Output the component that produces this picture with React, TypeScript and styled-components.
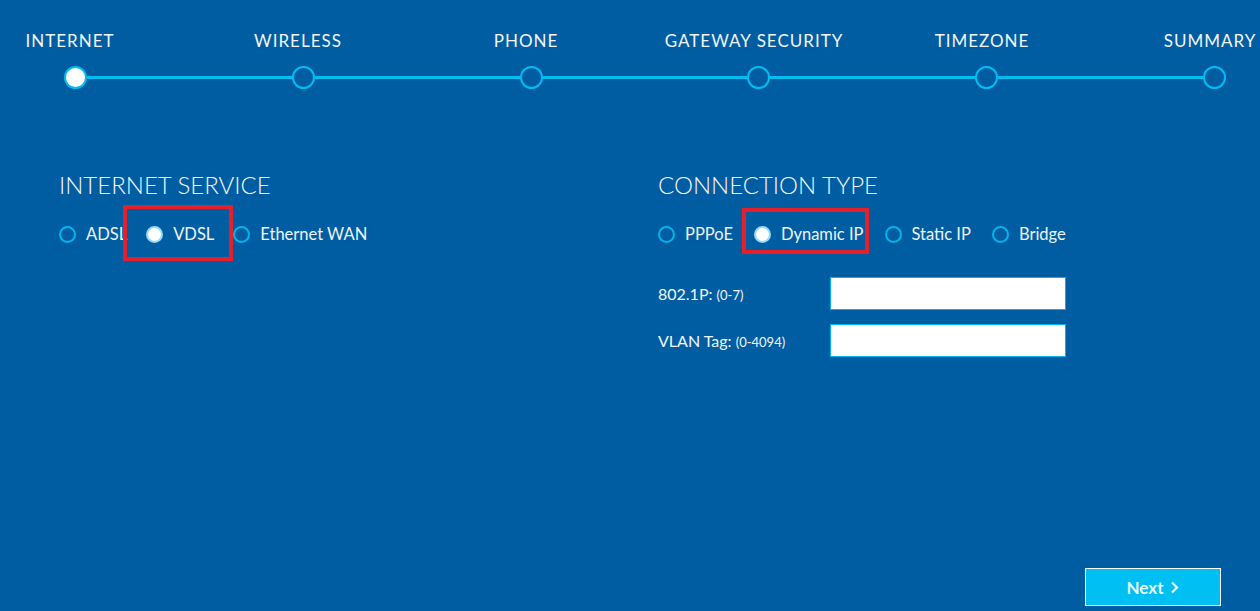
import styled, { createGlobalStyle } from "styled-components";

const GlobalStyle = createGlobalStyle`
  html, body {
    margin: 0;
    padding: 0;
    background: #005da2;
  }
  body {
    font-family: Lato, "Open Sans", sans-serif;
    color: #ffffff;
  }
`;

const Page = styled.div`
  min-height: 611px;
  display: flex;
  flex-direction: column;
  box-sizing: border-box;
  overflow: hidden;
`;

const StepLabels = styled.div`
  display: flex;
  justify-content: space-between;
  padding: 31px 39px 0 59px;
`;

const StepLabel = styled.div`
  width: 22px;
  display: flex;
  justify-content: center;
  white-space: nowrap;
  font-size: 17px;
  line-height: 20px;
  letter-spacing: 1px;
  color: #f2f6fa;
`;

const StepTrack = styled.div`
  display: flex;
  align-items: center;
  padding: 15px 34px 0 64px;
`;

const StepDot = styled.div<{ active?: boolean }>`
  width: 23px;
  height: 23px;
  box-sizing: border-box;
  border-radius: 50%;
  border: 2px solid #00bdf2;
  background: ${(p) => (p.active ? "#ffffff" : "transparent")};
  flex: none;
`;

const Connector = styled.div`
  flex: 1;
  height: 3px;
  background: #00bdf2;
`;

const Sections = styled.div`
  display: grid;
  grid-template-columns: 599px 1fr;
  padding: 81px 0 0 59px;
`;

const Section = styled.div`
  display: flex;
  flex-direction: column;
`;

const SectionTitle = styled.h2`
  margin: 0;
  font-size: 24px;
  line-height: 29px;
  font-weight: 300;
  color: #f4f7fb;
`;

const Options = styled.div<{ spacing: number }>`
  display: flex;
  align-items: center;
  gap: ${(p) => p.spacing}px;
  margin-top: 24px;
  height: 22px;
`;

const Option = styled.label`
  position: relative;
  display: flex;
  align-items: center;
  gap: 10px;
  height: 22px;
  font-size: 16.5px;
  color: #eef4fa;
`;

const RadioMark = styled.span<{ checked?: boolean }>`
  width: 17px;
  height: 17px;
  box-sizing: border-box;
  border-radius: 50%;
  border: 2px solid ${(p) => (p.checked ? "#8fdcf8" : "#00b4ec")};
  background: ${(p) => (p.checked ? "#ffffff" : "transparent")};
  flex: none;
`;

const Highlight = styled.span`
  position: absolute;
  border: 4px solid #e5202a;
  pointer-events: none;
`;

const Fields = styled.div`
  display: flex;
  flex-direction: column;
  gap: 14px;
  margin-top: 32px;
`;

const FieldRow = styled.div`
  display: flex;
  align-items: center;
`;

const FieldLabel = styled.span`
  width: 172px;
  font-size: 16px;
  color: #f2f6fa;
`;

const Range = styled.small`
  font-size: 13px;
`;

const TextInput = styled.input`
  width: 236px;
  height: 33px;
  box-sizing: border-box;
  border: 1px solid #00b4ec;
  background: #ffffff;
  margin: 0;
  padding: 0 6px;
  outline: none;
`;

const Footer = styled.div`
  margin-top: auto;
  display: flex;
  justify-content: flex-end;
  padding: 0 39px 5px 0;
`;

const NextButton = styled.button`
  width: 136px;
  height: 38px;
  box-sizing: border-box;
  background: #00c0f3;
  border: 1px solid #ffffff;
  color: #e8f8ff;
  font-family: Lato, "Open Sans", sans-serif;
  font-weight: 700;
  font-size: 17px;
  display: flex;
  align-items: center;
  justify-content: center;
  gap: 7px;
  padding: 0;
  cursor: pointer;
`;

const steps = ["INTERNET", "WIRELESS", "PHONE", "GATEWAY SECURITY", "TIMEZONE", "SUMMARY"];

type Opt = {
  label: string;
  checked?: boolean;
  box?: { top: number; left: number; right: number; bottom: number };
};

const services: Opt[] = [
  { label: "ADSL" },
  { label: "VDSL", checked: true, box: { top: -18, left: -23, right: -19, bottom: -16 } },
  { label: "Ethernet WAN" },
];

const connections: Opt[] = [
  { label: "PPPoE" },
  { label: "Dynamic IP", checked: true, box: { top: -15, left: -12, right: -5, bottom: -9 } },
  { label: "Static IP" },
  { label: "Bridge" },
];

const RadioGroup = ({ items, spacing }: { items: Opt[]; spacing: number }) => (
  <Options spacing={spacing}>
    {items.map((o) => (
      <Option key={o.label}>
        <RadioMark checked={o.checked} />
        {o.label}
        {o.box && <Highlight style={o.box} />}
      </Option>
    ))}
  </Options>
);

const App = () => {
  return (
    <>
      <GlobalStyle />
      <Page>
        <StepLabels>
          {steps.map((s) => (
            <StepLabel key={s}>{s}</StepLabel>
          ))}
        </StepLabels>
        <StepTrack>
          {steps.flatMap((s, i) => [
            i > 0 ? <Connector key={s + "-line"} /> : null,
            <StepDot key={s} active={i === 0} />,
          ])}
        </StepTrack>
        <Sections>
          <Section>
            <SectionTitle>INTERNET SERVICE</SectionTitle>
            <RadioGroup items={services} spacing={19} />
          </Section>
          <Section>
            <SectionTitle>CONNECTION TYPE</SectionTitle>
            <RadioGroup items={connections} spacing={21} />
            <Fields>
              <FieldRow>
                <FieldLabel>
                  802.1P: <Range>(0-7)</Range>
                </FieldLabel>
                <TextInput />
              </FieldRow>
              <FieldRow>
                <FieldLabel>
                  VLAN Tag: <Range>(0-4094)</Range>
                </FieldLabel>
                <TextInput />
              </FieldRow>
            </Fields>
          </Section>
        </Sections>
        <Footer>
          <NextButton>
            Next
            <svg width="9" height="13" viewBox="0 0 9 13">
              <polyline points="2,1.5 7,6.5 2,11.5" fill="none" stroke="#e8f8ff" strokeWidth="2.2" />
            </svg>
          </NextButton>
        </Footer>
      </Page>
    </>
  );
};

export default App;
